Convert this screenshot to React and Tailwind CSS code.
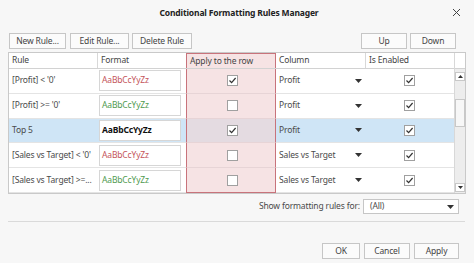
import React from "react";

const FONT = { fontFamily: '"Segoe UI", "Noto Sans", "Open Sans", sans-serif' };

function Check({ checked }) {
  return (
    <div className="w-[11px] h-[11px] border border-[#a0a0a0] bg-white flex items-center justify-center">
      {checked && (
        <svg width="9" height="9" viewBox="0 0 9 9">
          <path d="M1.5 4.5 L3.6 6.6 L7.6 2" fill="none" stroke="#333" strokeWidth="1.2" />
        </svg>
      )}
    </div>
  );
}

function Arrow() {
  return (
    <svg width="7" height="4" viewBox="0 0 7 4">
      <path d="M0 0 L7 0 L3.5 4 Z" fill="#333" />
    </svg>
  );
}

function Btn({ children, className = "" }) {
  return (
    <div className={"h-[16px] border border-[#c6c6c6] bg-[#fbfbfb] flex items-center justify-center text-[#444] " + className}>
      {children}
    </div>
  );
}

const rows = [
  { rule: "[Profit] < '0'", fmt: "red", apply: true, col: "Profit" },
  { rule: "[Profit] >= '0'", fmt: "green", apply: false, col: "Profit" },
  { rule: "Top 5", fmt: "bold", apply: true, col: "Profit", sel: true },
  { rule: "[Sales vs Target] < '0'", fmt: "red", apply: false, col: "Sales vs Target" },
  { rule: "[Sales vs Target] >=...", fmt: "green", apply: false, col: "Sales vs Target" },
];

function fmtClass(f) {
  if (f === "red") return "text-[#c4545a]";
  if (f === "green") return "text-[#4f9a4f]";
  return "text-[#111] font-bold";
}

export default function App() {
  return (
    <div className="w-[474px] h-[263px] bg-[#f7f7f7] text-[8.5px] tracking-[-0.15px] text-[#4a4a4a] flex flex-col overflow-hidden" style={FONT}>
      {/* title */}
      <div className="h-[26px] flex items-center relative">
        <div className="flex-1 text-center font-bold text-[#222] text-[8.5px] pl-[4px]">Conditional Formatting Rules Manager</div>
        <div className="absolute right-[13px] top-[8px] text-[#444]">
          <svg width="9" height="9" viewBox="0 0 9 9">
            <path d="M1 1 L8 8 M8 1 L1 8" stroke="#444" strokeWidth="1" />
          </svg>
        </div>
      </div>
      {/* toolbar */}
      <div className="flex items-center mt-[7px] px-[9px]">
        <Btn className="w-[57px]">New Rule...</Btn>
        <Btn className="w-[59px] ml-[4px]">Edit Rule...</Btn>
        <Btn className="w-[60px] ml-[3px]">Delete Rule</Btn>
        <div className="flex-1" />
        <Btn className="w-[46px]">Up</Btn>
        <Btn className="w-[46px] ml-[3px] mr-[9px]">Down</Btn>
      </div>
      {/* grid */}
      <div className="mx-[8px] mt-[3px] w-[458px] h-[142px] border border-[#c9c9c9] bg-white flex">
        <div className="w-[445px] flex flex-col">
          {/* header */}
          <div className="flex h-[16px] border-b border-[#d2d2d2] text-[#444]">
            <div className="w-[89px] pl-[3px] border-r border-[#d8d8d8] flex items-center">Rule</div>
            <div className="w-[88px] pl-[3px] flex items-center">Format</div>
            <div className="w-[90px] pl-[3px] flex items-center bg-[#f6e3e4] border-x border-t border-[#c8737b]">Apply to the row</div>
            <div className="w-[90px] pl-[3px] border-r border-[#d8d8d8] flex items-center">Column</div>
            <div className="w-[88px] pl-[3px] flex items-center">Is Enabled</div>
          </div>
          {rows.map((r, i) => (
            <div key={i} className={"flex h-[25px] " + (r.sel ? "bg-[#cfe5f6]" : "")}>
              <div className={"w-[89px] pl-[3px] flex items-center whitespace-nowrap overflow-hidden border-b border-[#e4e4e4]"}>{r.rule}</div>
              <div className={"w-[88px] flex items-center pl-[1px] pr-[5px] border-b border-[#e4e4e4]"}>
                <div className={"w-full h-[21px] bg-white border border-[#d6d6d6] flex items-center pl-[2px] " + fmtClass(r.fmt)}>AaBbCcYyZz</div>
              </div>
              <div className={"w-[90px] flex items-center justify-center pl-[3px] border-x border-[#c8737b] " + (r.sel ? "bg-[#e4dbe1]" : "bg-[#f6e3e4]") + (i === rows.length - 1 ? " border-b" : " border-b border-b-[#e7d4d6]")}>
                <Check checked={r.apply} />
              </div>
              <div className="w-[90px] flex items-center pl-[3px] pr-[4px] border-b border-[#e4e4e4]">
                <span className="flex-1">{r.col}</span>
                <Arrow />
              </div>
              <div className="w-[88px] flex items-center justify-center pr-[1px] border-b border-[#e4e4e4]">
                <Check checked />
              </div>
            </div>
          ))}
        </div>
        {/* scrollbar */}
        <div className="flex-1 flex flex-col border-l border-[#d8d8d8]">
          <div className="h-[16px] border-b border-[#d2d2d2]" />
          <div className="flex-1 bg-[#ededed] flex flex-col items-center pt-[3px] pb-[1px]">
            <div className="w-[10px] h-[9px] bg-white border border-[#c8c8c8] flex items-center justify-center">
              <svg width="5" height="3" viewBox="0 0 5 3"><path d="M0 3 L5 3 L2.5 0 Z" fill="#333" /></svg>
            </div>
            <div className="w-[10px] h-[28px] mt-[18px] bg-[#f7f7f7] border border-[#c8c8c8]" />
            <div className="flex-1" />
            <div className="w-[10px] h-[9px] bg-white border border-[#c8c8c8] flex items-center justify-center">
              <svg width="5" height="3" viewBox="0 0 5 3"><path d="M0 0 L5 0 L2.5 3 Z" fill="#333" /></svg>
            </div>
          </div>
        </div>
      </div>
      {/* filter */}
      <div className="flex items-center justify-end mt-[5px] pr-[15px]">
        <span className="mr-[3px]">Show formatting rules for:</span>
        <div className="w-[96px] h-[15px] bg-white border border-[#c6c6c6] flex items-center pl-[6px] pr-[4px]">
          <span className="flex-1">(All)</span>
          <Arrow />
        </div>
      </div>
      <div className="mx-[8px] mt-[7px] w-[457px] h-[1px] bg-[#dadada]" />
      {/* bottom buttons */}
      <div className="flex justify-end mt-[21px] pr-[15px]">
        <Btn className="w-[38px]">OK</Btn>
        <Btn className="w-[46px] ml-[4px]">Cancel</Btn>
        <Btn className="w-[45px] ml-[4px]">Apply</Btn>
      </div>
    </div>
  );
}
